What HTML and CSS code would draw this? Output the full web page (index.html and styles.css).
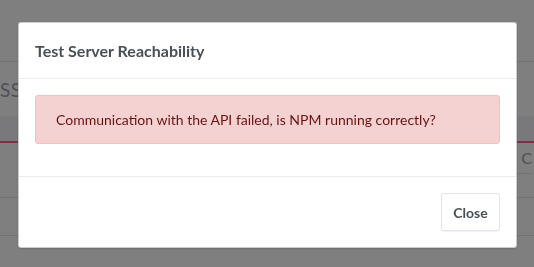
FILE: index.html
```html
<!DOCTYPE html>
<html lang="en">
<head>
    <meta charset="UTF-8">
    <meta name="viewport" content="width=device-width, initial-scale=1.0">
    <title>Test Server Reachability</title>
    <link rel="stylesheet" href="styles.css">
</head>
<body>
    <div class="page">
        <div class="topbar"></div>
        <div class="subnav">
            <span class="subnav-label">SSL</span>
        </div>
        <div class="band"></div>
        <div class="card">
            <div class="card-tools">
                <span class="search">Search C</span>
            </div>
            <div class="row"></div>
        </div>
    </div>

    <div class="backdrop">
        <div class="modal">
            <div class="modal-header">
                <h5 class="modal-title">Test Server Reachability</h5>
            </div>
            <div class="modal-body">
                <div class="alert alert-danger">Communication with the API failed, is NPM running correctly?</div>
            </div>
            <div class="modal-footer">
                <button class="btn">Close</button>
            </div>
        </div>
    </div>
</body>
</html>
```

FILE: styles.css
```css
body {
    margin: 0;
    font-family: 'Lato', 'Open Sans', sans-serif;
    font-size: 14px;
    color: #495057;
    background: #fff;
    height: 267px;
    overflow: hidden;
}
.page {
    background: #fff;
}
.topbar {
    height: 61px;
    border-bottom: 1px solid #e0e5ec;
}
.subnav {
    height: 54px;
    display: flex;
    align-items: center;
}
.subnav-label {
    font-size: 19px;
    color: #9aa0ac;
    letter-spacing: 0.5px;
}
.band {
    height: 25px;
    background: #f2f3f7;
    border-bottom: 2px solid #f6638f;
}
.card {
    background: #fff;
}
.card-tools {
    height: 54px;
    display: flex;
    justify-content: flex-end;
    border-bottom: 1px solid #e0e5ec;
}
.search {
    height: 30px;
    line-height: 30px;
    margin-right: 2px;
    padding-left: 40px;
    font-size: 16px;
    color: #9aa0ac;
    border-bottom: 1px solid #e0e5ec;
}
.row {
    height: 37px;
    border-bottom: 1px solid #e0e5ec;
}

.backdrop {
    position: fixed;
    inset: 0;
    background: rgba(0, 0, 0, 0.5);
}
.modal {
    width: 497px;
    margin: 22px 0 0 18px;
    background: #fff;
    border: 1px solid rgba(0, 0, 0, 0.2);
    border-radius: 3px;
    box-shadow: 0 1px 2px rgba(0, 0, 0, 0.15);
}
.modal-header {
    padding: 16px;
    border-bottom: 1px solid #e9ecef;
}
.modal-title {
    margin: 0;
    font-size: 16px;
    line-height: 23px;
    font-weight: 700;
    color: #495057;
}
.modal-body {
    padding: 16px;
}
.alert {
    margin-bottom: 16px;
    padding: 12px 20px;
    border: 1px solid #f1c1c0;
    border-radius: 3px;
    line-height: 23px;
}
.alert-danger {
    background: #f5d2d2;
    color: #6b1110;
}
.modal-footer {
    display: flex;
    justify-content: flex-end;
    padding: 16px;
    border-top: 1px solid #e9ecef;
}
.btn {
    height: 38px;
    width: 59px;
    padding: 0;
    font-family: inherit;
    font-size: 14px;
    font-weight: 700;
    color: #495057;
    background: #fff;
    border: 1px solid rgba(0, 40, 100, 0.12);
    border-radius: 3px;
    box-shadow: 0 2px 1px -1px rgba(0, 0, 0, 0.05);
}
```
